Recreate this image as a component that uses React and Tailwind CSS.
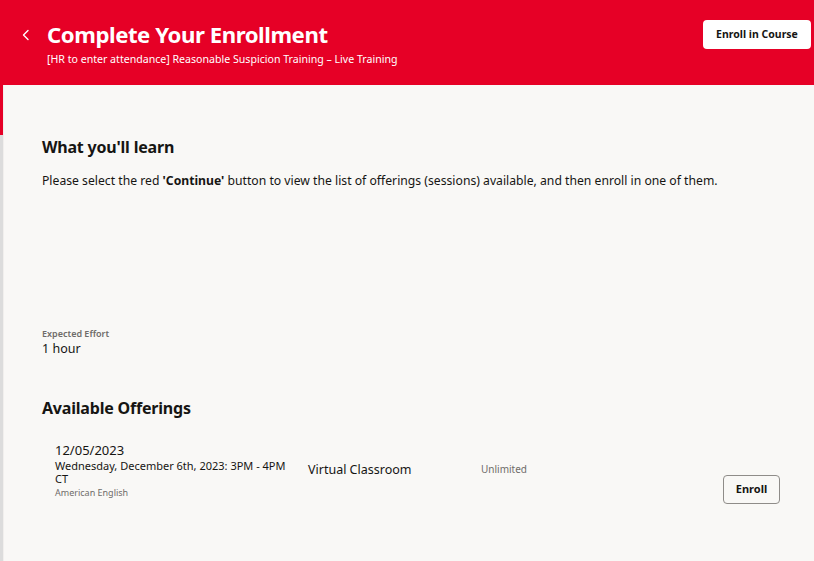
export default function App() {
  const font = { fontFamily: '"Noto Sans", "Open Sans", sans-serif' };
  return (
    <div className="w-[814px] h-[561px] overflow-hidden flex flex-col bg-[#f9f8f6] text-[#161513]" style={font}>
      <header className="h-[85px] bg-[#e60026] flex items-start justify-between shrink-0">
        <div className="flex items-start pt-[19px] pl-[20px]">
          <svg width="12" height="14" viewBox="0 0 12 14" className="mt-[9px]" fill="none">
            <path d="M8 2.5 L3.5 7 L8 11.5" stroke="white" strokeWidth="1.4" strokeLinecap="round" strokeLinejoin="round" />
          </svg>
          <div className="ml-[15px]">
            <h1 className="text-white text-[22.2px] font-bold leading-[32px] tracking-[-0.45px]">Complete Your Enrollment</h1>
            <p className="text-white text-[10.6px] leading-[14px] mt-[1px]">[HR to enter attendance] Reasonable Suspicion Training – Live Training</p>
          </div>
        </div>
        <button className="mt-[20px] mr-[3px] w-[108px] h-[29px] bg-white rounded-[4px] text-[10.5px] font-bold text-[#161513]">Enroll in Course</button>
      </header>
      <div className="flex flex-1">
        <div className="w-[3px] flex flex-col shrink-0">
          <div className="h-[50px] bg-[#e60026]"></div>
          <div className="flex-1 bg-[#dcdcdc]"></div>
        </div>
        <div className="w-[1px] bg-[#f1efed]"></div>
        <main className="flex-1 pl-[38px] pt-[52px]">
          <h2 className="text-[16px] font-bold leading-[20px] tracking-[-0.2px]">What you'll learn</h2>
          <p className="text-[12.2px] leading-[18px] mt-[15px]">
            Please select the red <b>'Continue'</b> button to view the list of offerings (sessions) available, and then enroll in one of them.
          </p>
          <div className="mt-[138px]">
            <div className="text-[9px] leading-[12px] text-[#6f6c69] font-semibold">Expected Effort</div>
            <div className="text-[12.5px] leading-[16px] mt-[1px]">1 hour</div>
          </div>
          <h2 className="text-[16px] font-bold leading-[20px] mt-[41px] tracking-[-0.2px]">Available Offerings</h2>
          <div className="flex items-start mt-[24px] pl-[13px] pr-[34px]">
            <div className="w-[253px]">
              <div className="text-[13px] leading-[16px]">12/05/2023</div>
              <div className="text-[11px] leading-[13px] mt-[1px] max-w-[232px]">Wednesday, December 6th, 2023: 3PM - 4PM CT</div>
              <div className="text-[9px] leading-[12px] text-[#6f6c69] mt-[2px]">American English</div>
            </div>
            <div className="w-[173px] text-[12.5px] leading-[16px] pt-[20px]">Virtual Classroom</div>
            <div className="text-[10px] leading-[14px] text-[#6f6c69] pt-[20px]">Unlimited</div>
            <div className="flex-1"></div>
            <button className="mt-[33px] w-[57px] h-[29px] border border-[#8f8c89] rounded-[4px] text-[11px] font-bold bg-[#f9f8f6]">Enroll</button>
          </div>
        </main>
      </div>
    </div>
  );
}
